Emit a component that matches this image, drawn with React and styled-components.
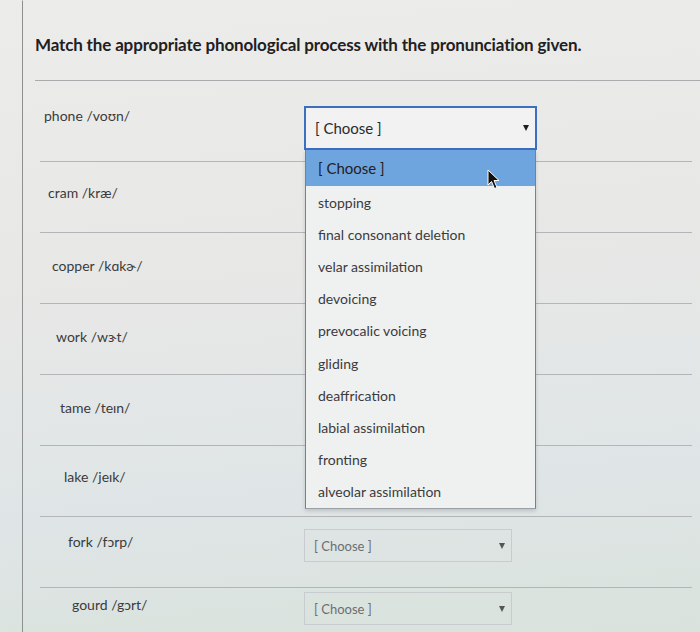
import styled, { createGlobalStyle } from "styled-components";

const GlobalStyle = createGlobalStyle`
    html, body {
        margin: 0;
        padding: 0;
    }
    body {
        width: 700px;
        height: 632px;
        overflow: hidden;
        font-family: Lato, "Open Sans", sans-serif;
        color: #2f3033;
        background: linear-gradient(175deg, #ececea 0%, #e7e8e6 45%, #dfe5e6 75%, #d9e2dc 100%);
    }
`

const Page = styled.div`
    height: 632px;
    padding-left: 22px;
    box-sizing: border-box;
`

const Panel = styled.div`
    height: 100%;
    border-left: 1px solid #8d8f91;
    border-top: 1px solid transparent;
`

const Title = styled.h2`
    margin: 34px 0 0 12px;
    font-size: 17px;
    line-height: 20px;
    font-weight: 700;
    letter-spacing: -0.15px;
    color: #1f2023;
`

const Divider = styled.div`
    margin: 25px 0 0 12px;
    border-top: 1px solid #a9abad;
`

const List = styled.div`
    display: flex;
    flex-direction: column;
`

const Row = styled.div`
    display: flex;
    align-items: flex-start;
    height: ${p => p.$first ? "81px" : "71px"};
    margin-left: 17px;
    margin-right: 8px;
    border-bottom: 1px solid ${p => p.$last ? "transparent" : "#b3b5b8"};
    box-sizing: border-box;
`

const Label = styled.div`
    width: 264px;
    padding: ${p => p.$top}px 0 0 ${p => p.$indent}px;
    box-sizing: border-box;
    font-size: 14px;
    line-height: 18px;
    color: #3a3b3e;
`

const SelectWrap = styled.div`
    position: relative;
    margin-top: ${p => p.$top}px;
    visibility: ${p => p.$covered ? "hidden" : "visible"};
`

const SelectBox = styled.div`
    width: ${p => p.$compact ? "208px" : "233px"};
    height: ${p => p.$compact ? "33px" : "44px"};
    box-sizing: border-box;
    display: flex;
    align-items: center;
    justify-content: space-between;
    padding: 0 6px 0 9px;
    border: ${p => p.$focused ? "2px solid #3d6fc0" : "1px solid #c9cccf"};
    background: ${p => p.$compact ? "transparent" : "#f1f2f1"};
    font-size: ${p => p.$compact ? "13px" : "15px"};
    color: ${p => p.$compact ? "#6c6e72" : "#2a2b2e"};
`

const Caret = styled.span`
    width: 0;
    height: 0;
    border-left: 3.5px solid transparent;
    border-right: 3.5px solid transparent;
    border-top: 6px solid ${p => p.$compact ? "#555" : "#1d1e20"};
`

const Menu = styled.div`
    position: absolute;
    top: 100%;
    left: 1px;
    width: 229px;
    background: #eff1f1;
    border: 1px solid #5b83c9;
    border-top: none;
    border-bottom-color: #9aa0a6;
    box-shadow: 0 2px 4px rgba(0, 0, 0, 0.15);
    z-index: 2;
    visibility: visible;
`

const Option = styled.div`
    height: ${p => p.$active ? "36px" : "32.2px"};
    display: flex;
    align-items: center;
    padding-left: 12px;
    font-size: ${p => p.$active ? "15px" : "14px"};
    color: ${p => p.$active ? "#1f2023" : "#3a3b3e"};
    background: ${p => p.$active ? "#6fa5df" : "transparent"};
`

const Cursor = styled.svg`
    position: absolute;
    left: 181px;
    top: 19px;
    z-index: 3;
`

const items = [
    { word: "phone /voʊn/", indent: 4, top: 26, selTop: 25 },
    { word: "cram /kræ/", indent: 8, top: 22, selTop: 25 },
    { word: "copper /kɑkɚ/", indent: 12, top: 24, selTop: 25 },
    { word: "work /wɝt/", indent: 16, top: 24, selTop: 25 },
    { word: "tame /teɪn/", indent: 20, top: 24, selTop: 25 },
    { word: "lake /jeɪk/", indent: 24, top: 22, selTop: 25 },
    { word: "fork /fɔrp/", indent: 28, top: 16, selTop: 12 },
    { word: "gourd /gɔrt/", indent: 32, top: 8, selTop: 4 },
]

const options = [
    "[ Choose ]",
    "stopping",
    "final consonant deletion",
    "velar assimilation",
    "devoicing",
    "prevocalic voicing",
    "gliding",
    "deaffrication",
    "labial assimilation",
    "fronting",
    "alveolar assimilation",
]

function Dropdown() {
    return (
        <Menu>
            {options.map((o, i) => (
                <Option key={o} $active={i === 0}>{o}</Option>
            ))}
            <Cursor width="14" height="21" viewBox="0 0 14 21">
                <path d="M1 1 L1 16 L4.5 12.5 L7.5 19.5 L10 18.5 L7 11.5 L12 11.5 Z"
                    fill="#111" stroke="#fff" strokeWidth="1" strokeLinejoin="round" />
            </Cursor>
        </Menu>
    )
}

export default function App() {
    return (
        <>
            <GlobalStyle />
            <Page>
                <Panel>
                    <Title>Match the appropriate phonological process with the pronunciation given.</Title>
                    <Divider />
                    <List>
                        {items.map((it, i) => {
                            const compact = i >= 6
                            const covered = i > 0 && i < 6
                            return (
                                <Row key={it.word} $first={i === 0} $last={i === items.length - 1}>
                                    <Label $indent={it.indent} $top={it.top}>{it.word}</Label>
                                    <SelectWrap $top={it.selTop} $covered={covered}>
                                        <SelectBox $compact={compact} $focused={i === 0}>
                                            <span>[ Choose ]</span>
                                            <Caret $compact={compact} />
                                        </SelectBox>
                                        {i === 0 && <Dropdown />}
                                    </SelectWrap>
                                </Row>
                            )
                        })}
                    </List>
                </Panel>
            </Page>
        </>
    )
}
